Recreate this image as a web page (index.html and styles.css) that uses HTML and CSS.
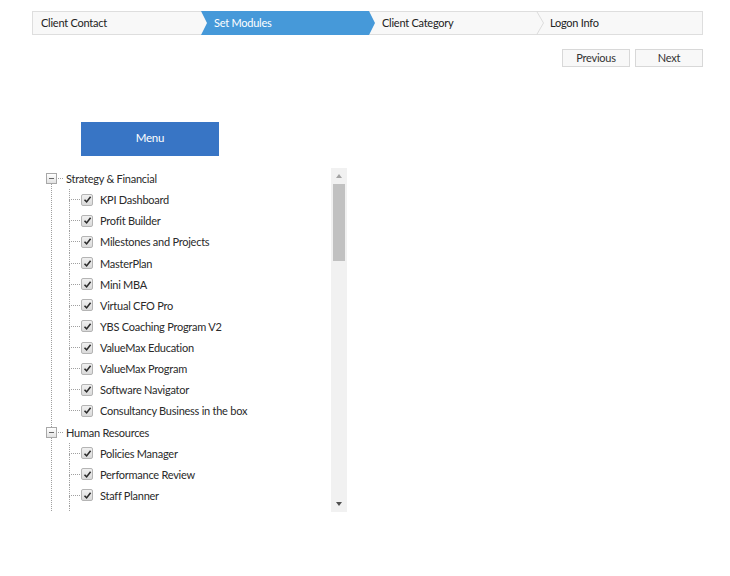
FILE: index.html
```html
<!DOCTYPE html>
<html>
<head>
<meta charset="utf-8">
<link rel="stylesheet" href="styles.css">
</head>
<body>
<div class="wizard">
  <div class="step first">Client Contact</div>
  <div class="step active">Set Modules</div>
  <div class="step">Client Category<svg class="sep" width="9" height="24" viewBox="0 0 9 24"><polyline points="0.5,0 7.5,12 0.5,24" fill="none" stroke="#dcdcdc" stroke-width="1"/></svg></div>
  <div class="step">Logon Info</div>
</div>
<div class="nav">
  <button class="btn">Previous</button>
  <button class="btn">Next</button>
</div>
<div class="menu">Menu</div>
<div class="panel">
  <div class="tree">
    <div class="group">
      <div class="prow"><span class="exp"><span class="minus"></span></span><span class="pdash"></span><span class="plabel">Strategy &amp; Financial</span></div>
      <div class="crow"><span class="conn"><span class="ct"></span><span class="cb"></span></span><span class="chk"><svg width="9" height="9" viewBox="0 0 9 9"><path d="M1.5 4.8 L3.6 6.9 L7.6 1.8" fill="none" stroke="#2b2b2b" stroke-width="1.6"/></svg></span><span class="clabel">KPI Dashboard</span></div>
      <div class="crow"><span class="conn"><span class="ct"></span><span class="cb"></span></span><span class="chk"><svg width="9" height="9" viewBox="0 0 9 9"><path d="M1.5 4.8 L3.6 6.9 L7.6 1.8" fill="none" stroke="#2b2b2b" stroke-width="1.6"/></svg></span><span class="clabel">Profit Builder</span></div>
      <div class="crow"><span class="conn"><span class="ct"></span><span class="cb"></span></span><span class="chk"><svg width="9" height="9" viewBox="0 0 9 9"><path d="M1.5 4.8 L3.6 6.9 L7.6 1.8" fill="none" stroke="#2b2b2b" stroke-width="1.6"/></svg></span><span class="clabel">Milestones and Projects</span></div>
      <div class="crow"><span class="conn"><span class="ct"></span><span class="cb"></span></span><span class="chk"><svg width="9" height="9" viewBox="0 0 9 9"><path d="M1.5 4.8 L3.6 6.9 L7.6 1.8" fill="none" stroke="#2b2b2b" stroke-width="1.6"/></svg></span><span class="clabel">MasterPlan</span></div>
      <div class="crow"><span class="conn"><span class="ct"></span><span class="cb"></span></span><span class="chk"><svg width="9" height="9" viewBox="0 0 9 9"><path d="M1.5 4.8 L3.6 6.9 L7.6 1.8" fill="none" stroke="#2b2b2b" stroke-width="1.6"/></svg></span><span class="clabel">Mini MBA</span></div>
      <div class="crow"><span class="conn"><span class="ct"></span><span class="cb"></span></span><span class="chk"><svg width="9" height="9" viewBox="0 0 9 9"><path d="M1.5 4.8 L3.6 6.9 L7.6 1.8" fill="none" stroke="#2b2b2b" stroke-width="1.6"/></svg></span><span class="clabel">Virtual CFO Pro</span></div>
      <div class="crow"><span class="conn"><span class="ct"></span><span class="cb"></span></span><span class="chk"><svg width="9" height="9" viewBox="0 0 9 9"><path d="M1.5 4.8 L3.6 6.9 L7.6 1.8" fill="none" stroke="#2b2b2b" stroke-width="1.6"/></svg></span><span class="clabel">YBS Coaching Program V2</span></div>
      <div class="crow"><span class="conn"><span class="ct"></span><span class="cb"></span></span><span class="chk"><svg width="9" height="9" viewBox="0 0 9 9"><path d="M1.5 4.8 L3.6 6.9 L7.6 1.8" fill="none" stroke="#2b2b2b" stroke-width="1.6"/></svg></span><span class="clabel">ValueMax Education</span></div>
      <div class="crow"><span class="conn"><span class="ct"></span><span class="cb"></span></span><span class="chk"><svg width="9" height="9" viewBox="0 0 9 9"><path d="M1.5 4.8 L3.6 6.9 L7.6 1.8" fill="none" stroke="#2b2b2b" stroke-width="1.6"/></svg></span><span class="clabel">ValueMax Program</span></div>
      <div class="crow"><span class="conn"><span class="ct"></span><span class="cb"></span></span><span class="chk"><svg width="9" height="9" viewBox="0 0 9 9"><path d="M1.5 4.8 L3.6 6.9 L7.6 1.8" fill="none" stroke="#2b2b2b" stroke-width="1.6"/></svg></span><span class="clabel">Software Navigator</span></div>
      <div class="crow last"><span class="conn"><span class="ct"></span><span class="cb"></span></span><span class="chk"><svg width="9" height="9" viewBox="0 0 9 9"><path d="M1.5 4.8 L3.6 6.9 L7.6 1.8" fill="none" stroke="#2b2b2b" stroke-width="1.6"/></svg></span><span class="clabel">Consultancy Business in the box</span></div>
    </div>
    <div class="group">
      <div class="prow"><span class="exp"><span class="minus"></span></span><span class="pdash"></span><span class="plabel">Human Resources</span></div>
      <div class="crow"><span class="conn"><span class="ct"></span><span class="cb"></span></span><span class="chk"><svg width="9" height="9" viewBox="0 0 9 9"><path d="M1.5 4.8 L3.6 6.9 L7.6 1.8" fill="none" stroke="#2b2b2b" stroke-width="1.6"/></svg></span><span class="clabel">Policies Manager</span></div>
      <div class="crow"><span class="conn"><span class="ct"></span><span class="cb"></span></span><span class="chk"><svg width="9" height="9" viewBox="0 0 9 9"><path d="M1.5 4.8 L3.6 6.9 L7.6 1.8" fill="none" stroke="#2b2b2b" stroke-width="1.6"/></svg></span><span class="clabel">Performance Review</span></div>
      <div class="crow"><span class="conn"><span class="ct"></span><span class="cb"></span></span><span class="chk"><svg width="9" height="9" viewBox="0 0 9 9"><path d="M1.5 4.8 L3.6 6.9 L7.6 1.8" fill="none" stroke="#2b2b2b" stroke-width="1.6"/></svg></span><span class="clabel">Staff Planner</span></div>
      <div class="crow"><span class="conn"><span class="ct"></span><span class="cb"></span></span></div>
    </div>
  </div>
  <div class="scrollbar">
    <div class="arrow up"></div>
    <div class="track"><div class="thumb"></div></div>
    <div class="arrow down"></div>
  </div>
</div>
</body>
</html>
```

FILE: styles.css
```css
html, body {
  margin: 0;
  padding: 0;
  background: #fff;
}
body {
  font-family: Lato, "Open Sans", sans-serif;
  font-size: 11px;
  letter-spacing: -0.25px;
  color: #333;
}
.wizard {
  display: flex;
  margin: 11px 27px 0 32px;
  height: 22px;
  border: 1px solid #dedede;
  background: #f8f8f8;
}
.step {
  position: relative;
  flex: 0 0 168px;
  padding-left: 13px;
  line-height: 22px;
  color: #222;
  box-sizing: border-box;
}
.step.first {
  padding-left: 8px;
}
.step.active {
  color: #fff;
  z-index: 1;
}
.step.active::before {
  content: "";
  position: absolute;
  left: 0;
  top: -1px;
  bottom: -1px;
  width: 174px;
  background: #4699d9;
  clip-path: polygon(0 0, 168px 0, 174px 50%, 168px 100%, 0 100%, 6px 50%);
  z-index: -1;
}
.sep {
  position: absolute;
  right: -8px;
  top: -1px;
}
.nav {
  display: flex;
  justify-content: flex-end;
  gap: 5px;
  margin: 14px 27px 0 0;
}
.btn {
  width: 68px;
  height: 18px;
  padding: 0;
  border: 1px solid #d8d8d8;
  background: #f8f8f8;
  font-family: Lato, "Open Sans", sans-serif;
  font-size: 11px;
  letter-spacing: -0.25px;
  color: #333;
  line-height: 16px;
}
.menu {
  margin: 55px 0 0 81px;
  width: 138px;
  height: 34px;
  background: #3875c5;
  color: #fff;
  font-size: 11.5px;
  line-height: 32px;
  text-align: center;
}
.panel {
  display: flex;
  margin: 12px 0 0 40px;
  width: 307px;
  height: 344px;
}
.tree {
  flex: 1;
  overflow: hidden;
  background-image: repeating-linear-gradient(to bottom, #a0a0a0 0 1px, transparent 1px 2px);
  background-repeat: no-repeat;
  background-size: 1px calc(100% - 16px);
  background-position: 11px 16px;
}
.prow, .crow {
  display: flex;
  align-items: center;
  height: 21.13px;
}
.prow {
  padding-left: 6px;
}
.exp {
  width: 9px;
  height: 9px;
  border: 1px solid #a8a8a8;
  background: linear-gradient(#ffffff, #e2e2e2);
  display: flex;
  align-items: center;
  justify-content: center;
}
.minus {
  width: 5px;
  height: 1px;
  background: #666;
}
.pdash {
  width: 5px;
  margin-left: 1px;
  border-top: 1px dotted #a0a0a0;
}
.plabel {
  margin-left: 3px;
  color: #2a2a2a;
}
.crow {
  padding-left: 29px;
  align-items: stretch;
}
.conn {
  width: 11px;
  display: flex;
  flex-direction: column;
}
.ct {
  flex: 1;
  border-left: 1px dotted #a0a0a0;
  border-bottom: 1px dotted #a0a0a0;
}
.cb {
  flex: 1;
  border-left: 1px dotted #a0a0a0;
}
.crow.last .cb {
  border-left-color: transparent;
}
.chk {
  align-self: center;
  width: 10px;
  height: 10px;
  margin-left: 1px;
  border: 1px solid #b4b4b4;
  border-radius: 2px;
  background: linear-gradient(#f0f0f0, #dadada);
  display: flex;
  align-items: center;
  justify-content: center;
}
.chk svg {
  display: block;
}
.clabel {
  align-self: center;
  margin-left: 7px;
  color: #2a2a2a;
  white-space: nowrap;
}
.scrollbar {
  flex: 0 0 16px;
  display: flex;
  flex-direction: column;
  background: #f1f1f1;
}
.arrow {
  height: 16px;
  display: flex;
  align-items: center;
  justify-content: center;
}
.arrow::before {
  content: "";
  width: 0;
  height: 0;
  border-left: 3.5px solid transparent;
  border-right: 3.5px solid transparent;
}
.arrow.up::before {
  border-bottom: 4px solid #a3a3a3;
}
.arrow.down::before {
  border-top: 4px solid #505050;
}
.track {
  flex: 1;
  padding: 0 2px;
}
.thumb {
  height: 77px;
  background: #c1c1c1;
}
```
